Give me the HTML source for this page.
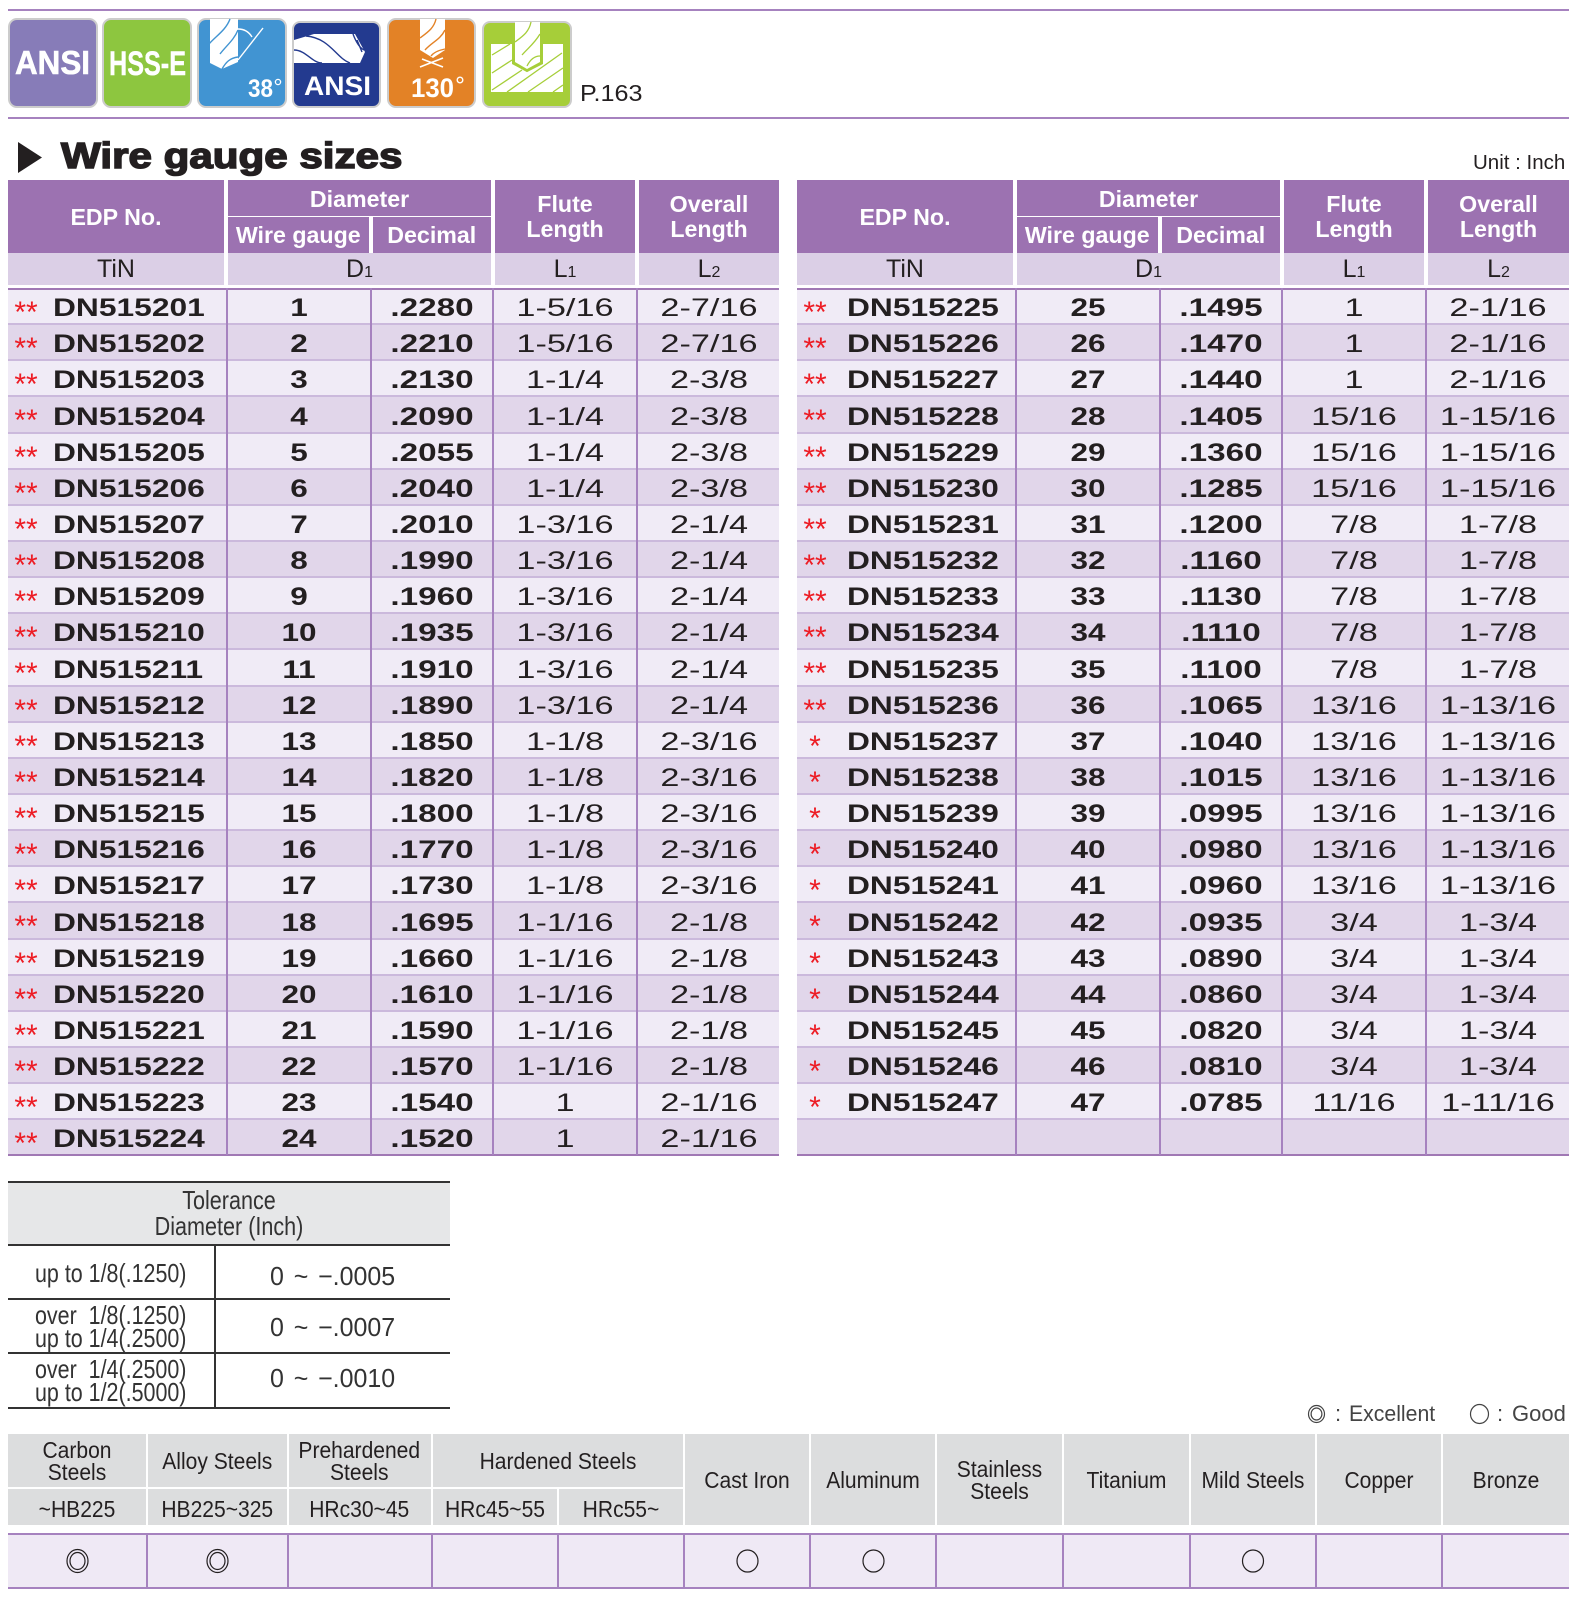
<!DOCTYPE html>
<html><head><meta charset="utf-8"><title>Wire gauge sizes</title>
<style>
html,body{margin:0;padding:0;background:#fff}
#pg{position:relative;width:1577px;height:1600px;overflow:hidden;background:#fff;font-family:"Liberation Sans",sans-serif;color:#231f20}
#pg div{position:absolute}
.ln{left:8px;width:1561px;height:2px;background:#a682bf}
.tb{left:0;top:0;width:800px;height:1160px}
.h{background:#9c72b1}.l{background:#dbcfe6}
.ht{color:#fff;font-weight:bold;font-size:23.2px;line-height:25px;text-align:center;white-space:nowrap}
.st{font-size:25px;line-height:28px;text-align:center;top:255px;color:#231f20}
.st span{font-size:16px}
.rows{left:8px;top:289px;width:771.5px;height:866px;overflow:hidden}
#pg .rows p{position:relative;margin:0;height:36.15px;box-sizing:border-box;border-bottom:2px solid #cbb9dc;background:#f0ebf6}
#pg .rows p:nth-child(even){background:#e1d6ea}
.rows i,.rows b,.rows u,.rows s,.rows em{position:absolute;top:1.2px;line-height:36px;font-size:25px;font-style:normal;text-decoration:none;text-align:center;white-space:nowrap}
.rows i{left:0;width:36px;top:6px;font-size:30px;color:#ed1c24;font-weight:normal}
.rows b{left:45px;transform:scaleX(1.27);transform-origin:left;font-weight:bold}
.rt b{left:50px}
.rows em{left:218.5px;width:144px;font-weight:bold;transform:scaleX(1.26)}
.rows u{left:362.5px;width:122px;font-weight:bold;transform:scaleX(1.33)}
.rows s{left:484.5px;width:144px;transform:scaleX(1.37)}
.rows s+s{left:630px;width:142px}
.v{width:2px;top:288px;height:867px;background:#a682bf}
.bar{left:8px;width:771.5px;height:2px;background:#a078b4}
.k{left:8px;width:442px;height:2px;background:#333}
.t{font-size:26px;line-height:28px;white-space:pre;color:#333}
.tl{left:35px;transform:scaleX(.825);transform-origin:left}
.tr{left:269.5px;word-spacing:3px;transform:scaleX(.96);transform-origin:left}
.g{background:#dcddde;top:1434px}
.m{font-size:23px;line-height:22px;margin-top:-1px;text-align:center;white-space:nowrap;transform:scaleX(.915);color:#231f20}
.dv{top:1534px;width:2px;height:54px;background:#a682bf}
.lg{font-size:22px;line-height:24px;color:#444;white-space:nowrap}
</style></head><body><div id="pg">

<div class="ln" style="top:9px"></div>
<div class="ln" style="top:117px"></div>

<svg style="position:absolute;left:0;top:0" width="600" height="120" viewBox="0 0 600 120" font-family="Liberation Sans, sans-serif" font-weight="bold" fill="#fff">
<rect x="9" y="19" width="88" height="88" rx="8" fill="#877cb8" stroke="#ccc" stroke-width="2"/>
<text x="15" y="74" font-size="33" textLength="75" lengthAdjust="spacingAndGlyphs" stroke="#fff" stroke-width=".6">ANSI</text>
<rect x="103" y="19" width="88" height="88" rx="8" fill="#8dc63f" stroke="#ccc" stroke-width="2"/>
<text x="109" y="75" font-size="34" textLength="77" lengthAdjust="spacingAndGlyphs" stroke="#fff" stroke-width=".4">HSS-E</text>
<rect x="198" y="19" width="88" height="88" rx="8" fill="#4194d2" stroke="#ccc" stroke-width="2"/>
<path d="M210 19H238V62L222 69L210 63Z"/>
<path d="M209 44C216 36 226 30 230 19M220 54C226 46 234 40 238 30M222 69C226 62 230 58 238 57" fill="none" stroke="#4194d2" stroke-width="1.4"/>
<path d="M238 60L263 28M238 29C244 29 249 32 252 37" fill="none" stroke="#fff" stroke-width="1.4"/>
<text x="248" y="97" font-size="25" textLength="25" lengthAdjust="spacingAndGlyphs">38</text>
<circle cx="278" cy="82" r="2.6" fill="none" stroke="#fff" stroke-width="1.3"/>
<rect x="293" y="22" width="87" height="85" rx="7" fill="#233a8f" stroke="#ccc" stroke-width="2"/>
<path d="M294 40L314 34H355L365 52L360 63H294Z"/>
<path d="M294 50C306 50 312 63 322 63M306 36C330 38 336 58 350 63M353 34C356 42 360 48 364 50M357 40L362 52" fill="none" stroke="#233a8f" stroke-width="1.4"/>
<text x="304" y="95" font-size="27" textLength="67" lengthAdjust="spacingAndGlyphs">ANSI</text>
<rect x="388" y="19" width="87" height="88" rx="8" fill="#e38226" stroke="#ccc" stroke-width="2"/>
<path d="M420 19H445V50L433 58L420 50Z"/>
<path d="M420 38C428 32 434 28 436 19M425 50C432 42 440 40 445 30M431 56C434 52 440 50 445 49" fill="none" stroke="#e38226" stroke-width="1.4"/>
<path d="M420 67L443 58M422 59L443 67" fill="none" stroke="#fff" stroke-width="1.6"/>
<text x="411" y="97" font-size="27" textLength="43" lengthAdjust="spacingAndGlyphs">130</text>
<circle cx="460" cy="80" r="2.8" fill="none" stroke="#fff" stroke-width="1.4"/>
<rect x="483" y="22" width="88" height="85" rx="7" fill="#a6ce39" stroke="#ccc" stroke-width="2"/>
<path d="M491 44H512V64L527 72L543 64V44H563V92H491Z"/>
<path d="M492 55L510 44M492 73L512 60M492 90L522 70M507 92L562 53M528 92L563 68M553 92L563 85" fill="none" stroke="#a6ce39" stroke-width="1.3"/>
<path d="M515 22H540V62L527 69L515 62Z"/>
<path d="M515 42C523 36 529 32 531 22M522 55C528 48 534 44 540 34M527 66C530 60 534 56 540 56" fill="none" stroke="#a6ce39" stroke-width="1.3"/>
<path d="M513 44V63L527 71L542 63V44" fill="none" stroke="#a6ce39" stroke-width="2"/>
</svg>
<div style="left:580px;top:79px;font-size:23.5px;line-height:28px;color:#231f20;transform:scaleX(1.07);transform-origin:left">P.163</div>

<svg style="position:absolute;left:18px;top:142px" width="25" height="32"><path d="M0 0L24 15.5L0 31Z" fill="#231f20"/></svg>
<div style="left:61px;top:135px;font-size:36px;line-height:42px;font-weight:bold;white-space:nowrap;transform:scaleX(1.17);transform-origin:left;-webkit-text-stroke:1.5px #231f20;color:#231f20">Wire gauge sizes</div>
<div style="left:1473px;top:152px;font-size:20.5px;line-height:22px;white-space:nowrap">Unit : Inch</div>

<!-- LEFT TABLE -->
<div class="tb">
<div class="h" style="left:8px;top:180px;width:216px;height:72.5px"></div>
<div class="h" style="left:228px;top:180px;width:263px;height:35.5px"></div>
<div class="h" style="left:228px;top:217px;width:140.5px;height:35.5px"></div>
<div class="h" style="left:372.5px;top:217px;width:118.5px;height:35.5px"></div>
<div class="h" style="left:495px;top:180px;width:140px;height:72.5px"></div>
<div class="h" style="left:639px;top:180px;width:140px;height:72.5px"></div>
<div class="l" style="left:8px;top:252.5px;width:216px;height:32px"></div>
<div class="l" style="left:228px;top:252.5px;width:263px;height:32px"></div>
<div class="l" style="left:495px;top:252.5px;width:140px;height:32px"></div>
<div class="l" style="left:639px;top:252.5px;width:140px;height:32px"></div>
<div class="ht" style="left:8px;top:205px;width:216px">EDP No.</div>
<div class="ht" style="left:228px;top:187px;width:263px">Diameter</div>
<div class="ht" style="left:228px;top:223px;width:140.5px">Wire gauge</div>
<div class="ht" style="left:372.5px;top:223px;width:118.5px">Decimal</div>
<div class="ht" style="left:495px;top:192px;width:140px">Flute<br>Length</div>
<div class="ht" style="left:639px;top:192px;width:140px">Overall<br>Length</div>
<div class="st" style="left:8px;width:216px">TiN</div>
<div class="st" style="left:228px;width:263px">D<span>1</span></div>
<div class="st" style="left:495px;width:140px">L<span>1</span></div>
<div class="st" style="left:639px;width:140px">L<span>2</span></div>
<div class="rows" style="width:771px">
<p><i>**</i><b>DN515201</b><em>1</em><u>.2280</u><s>1-5/16</s><s>2-7/16</s></p>
<p><i>**</i><b>DN515202</b><em>2</em><u>.2210</u><s>1-5/16</s><s>2-7/16</s></p>
<p><i>**</i><b>DN515203</b><em>3</em><u>.2130</u><s>1-1/4</s><s>2-3/8</s></p>
<p><i>**</i><b>DN515204</b><em>4</em><u>.2090</u><s>1-1/4</s><s>2-3/8</s></p>
<p><i>**</i><b>DN515205</b><em>5</em><u>.2055</u><s>1-1/4</s><s>2-3/8</s></p>
<p><i>**</i><b>DN515206</b><em>6</em><u>.2040</u><s>1-1/4</s><s>2-3/8</s></p>
<p><i>**</i><b>DN515207</b><em>7</em><u>.2010</u><s>1-3/16</s><s>2-1/4</s></p>
<p><i>**</i><b>DN515208</b><em>8</em><u>.1990</u><s>1-3/16</s><s>2-1/4</s></p>
<p><i>**</i><b>DN515209</b><em>9</em><u>.1960</u><s>1-3/16</s><s>2-1/4</s></p>
<p><i>**</i><b>DN515210</b><em>10</em><u>.1935</u><s>1-3/16</s><s>2-1/4</s></p>
<p><i>**</i><b>DN515211</b><em>11</em><u>.1910</u><s>1-3/16</s><s>2-1/4</s></p>
<p><i>**</i><b>DN515212</b><em>12</em><u>.1890</u><s>1-3/16</s><s>2-1/4</s></p>
<p><i>**</i><b>DN515213</b><em>13</em><u>.1850</u><s>1-1/8</s><s>2-3/16</s></p>
<p><i>**</i><b>DN515214</b><em>14</em><u>.1820</u><s>1-1/8</s><s>2-3/16</s></p>
<p><i>**</i><b>DN515215</b><em>15</em><u>.1800</u><s>1-1/8</s><s>2-3/16</s></p>
<p><i>**</i><b>DN515216</b><em>16</em><u>.1770</u><s>1-1/8</s><s>2-3/16</s></p>
<p><i>**</i><b>DN515217</b><em>17</em><u>.1730</u><s>1-1/8</s><s>2-3/16</s></p>
<p><i>**</i><b>DN515218</b><em>18</em><u>.1695</u><s>1-1/16</s><s>2-1/8</s></p>
<p><i>**</i><b>DN515219</b><em>19</em><u>.1660</u><s>1-1/16</s><s>2-1/8</s></p>
<p><i>**</i><b>DN515220</b><em>20</em><u>.1610</u><s>1-1/16</s><s>2-1/8</s></p>
<p><i>**</i><b>DN515221</b><em>21</em><u>.1590</u><s>1-1/16</s><s>2-1/8</s></p>
<p><i>**</i><b>DN515222</b><em>22</em><u>.1570</u><s>1-1/16</s><s>2-1/8</s></p>
<p><i>**</i><b>DN515223</b><em>23</em><u>.1540</u><s>1</s><s>2-1/16</s></p>
<p><i>**</i><b>DN515224</b><em>24</em><u>.1520</u><s>1</s><s>2-1/16</s></p>
</div>
<div class="bar" style="top:287.5px;width:771px"></div>
<div class="bar" style="top:1154px;width:771px"></div>
<div class="v" style="left:226px"></div>
<div class="v" style="left:370px"></div>
<div class="v" style="left:492px"></div>
<div class="v" style="left:636px"></div>
</div>

<!-- RIGHT TABLE -->
<div class="tb" style="left:789px">
<div class="h" style="left:8px;top:180px;width:216px;height:72.5px"></div>
<div class="h" style="left:228px;top:180px;width:263px;height:35.5px"></div>
<div class="h" style="left:228px;top:217px;width:140.5px;height:35.5px"></div>
<div class="h" style="left:372.5px;top:217px;width:118.5px;height:35.5px"></div>
<div class="h" style="left:495px;top:180px;width:140px;height:72.5px"></div>
<div class="h" style="left:639px;top:180px;width:141px;height:72.5px"></div>
<div class="l" style="left:8px;top:252.5px;width:216px;height:32px"></div>
<div class="l" style="left:228px;top:252.5px;width:263px;height:32px"></div>
<div class="l" style="left:495px;top:252.5px;width:140px;height:32px"></div>
<div class="l" style="left:639px;top:252.5px;width:141px;height:32px"></div>
<div class="ht" style="left:8px;top:205px;width:216px">EDP No.</div>
<div class="ht" style="left:228px;top:187px;width:263px">Diameter</div>
<div class="ht" style="left:228px;top:223px;width:140.5px">Wire gauge</div>
<div class="ht" style="left:372.5px;top:223px;width:118.5px">Decimal</div>
<div class="ht" style="left:495px;top:192px;width:140px">Flute<br>Length</div>
<div class="ht" style="left:639px;top:192px;width:141px">Overall<br>Length</div>
<div class="st" style="left:8px;width:216px">TiN</div>
<div class="st" style="left:228px;width:263px">D<span>1</span></div>
<div class="st" style="left:495px;width:140px">L<span>1</span></div>
<div class="st" style="left:639px;width:141px">L<span>2</span></div>
<div class="rows rt" style="width:772px">
<p><i>**</i><b>DN515225</b><em>25</em><u>.1495</u><s>1</s><s>2-1/16</s></p>
<p><i>**</i><b>DN515226</b><em>26</em><u>.1470</u><s>1</s><s>2-1/16</s></p>
<p><i>**</i><b>DN515227</b><em>27</em><u>.1440</u><s>1</s><s>2-1/16</s></p>
<p><i>**</i><b>DN515228</b><em>28</em><u>.1405</u><s>15/16</s><s>1-15/16</s></p>
<p><i>**</i><b>DN515229</b><em>29</em><u>.1360</u><s>15/16</s><s>1-15/16</s></p>
<p><i>**</i><b>DN515230</b><em>30</em><u>.1285</u><s>15/16</s><s>1-15/16</s></p>
<p><i>**</i><b>DN515231</b><em>31</em><u>.1200</u><s>7/8</s><s>1-7/8</s></p>
<p><i>**</i><b>DN515232</b><em>32</em><u>.1160</u><s>7/8</s><s>1-7/8</s></p>
<p><i>**</i><b>DN515233</b><em>33</em><u>.1130</u><s>7/8</s><s>1-7/8</s></p>
<p><i>**</i><b>DN515234</b><em>34</em><u>.1110</u><s>7/8</s><s>1-7/8</s></p>
<p><i>**</i><b>DN515235</b><em>35</em><u>.1100</u><s>7/8</s><s>1-7/8</s></p>
<p><i>**</i><b>DN515236</b><em>36</em><u>.1065</u><s>13/16</s><s>1-13/16</s></p>
<p><i>*</i><b>DN515237</b><em>37</em><u>.1040</u><s>13/16</s><s>1-13/16</s></p>
<p><i>*</i><b>DN515238</b><em>38</em><u>.1015</u><s>13/16</s><s>1-13/16</s></p>
<p><i>*</i><b>DN515239</b><em>39</em><u>.0995</u><s>13/16</s><s>1-13/16</s></p>
<p><i>*</i><b>DN515240</b><em>40</em><u>.0980</u><s>13/16</s><s>1-13/16</s></p>
<p><i>*</i><b>DN515241</b><em>41</em><u>.0960</u><s>13/16</s><s>1-13/16</s></p>
<p><i>*</i><b>DN515242</b><em>42</em><u>.0935</u><s>3/4</s><s>1-3/4</s></p>
<p><i>*</i><b>DN515243</b><em>43</em><u>.0890</u><s>3/4</s><s>1-3/4</s></p>
<p><i>*</i><b>DN515244</b><em>44</em><u>.0860</u><s>3/4</s><s>1-3/4</s></p>
<p><i>*</i><b>DN515245</b><em>45</em><u>.0820</u><s>3/4</s><s>1-3/4</s></p>
<p><i>*</i><b>DN515246</b><em>46</em><u>.0810</u><s>3/4</s><s>1-3/4</s></p>
<p><i>*</i><b>DN515247</b><em>47</em><u>.0785</u><s>11/16</s><s>1-11/16</s></p>
<p></p>
</div>
<div class="bar" style="top:287.5px;width:772px"></div>
<div class="bar" style="top:1154px;width:772px"></div>
<div class="v" style="left:226px"></div>
<div class="v" style="left:370px"></div>
<div class="v" style="left:492px"></div>
<div class="v" style="left:636px"></div>
</div>

<!-- TOLERANCE -->
<div style="left:8px;top:1182px;width:442px;height:63px;background:#e6e7e8"></div>
<div class="k" style="top:1181px"></div>
<div class="k" style="top:1244px"></div>
<div class="k" style="top:1298px"></div>
<div class="k" style="top:1352px"></div>
<div class="k" style="top:1407px"></div>
<div style="left:214px;top:1245px;width:2px;height:163px;background:#333"></div>
<div class="t" style="left:8px;width:442px;top:1188px;text-align:center;transform:scaleX(.83);line-height:25.5px">Tolerance
Diameter (Inch)</div>
<div class="t tl" style="top:1259px">up to 1/8(.1250)</div>
<div class="t tl" style="top:1301px">over  1/8(.1250)</div>
<div class="t tl" style="top:1324px">up to 1/4(.2500)</div>
<div class="t tl" style="top:1355px">over  1/4(.2500)</div>
<div class="t tl" style="top:1378px">up to 1/2(.5000)</div>
<div class="t tr" style="top:1262px">0 ~ −.0005</div>
<div class="t tr" style="top:1313px">0 ~ −.0007</div>
<div class="t tr" style="top:1364px">0 ~ −.0010</div>

<!-- LEGEND -->
<svg style="position:absolute;left:1300px;top:1400px" width="200" height="30" fill="none" stroke="#444">
<ellipse cx="16.5" cy="14" rx="8" ry="8.5" stroke-width="1.2"/><ellipse cx="16.5" cy="14" rx="5.4" ry="6" stroke-width="1.2"/>
<ellipse cx="179.5" cy="14" rx="9" ry="9.5" stroke-width="1.2"/>
</svg>
<div class="lg" style="left:1335px;top:1402px">:</div>
<div class="lg" style="left:1348.5px;top:1402px;transform:scaleX(.965);transform-origin:left">Excellent</div>
<div class="lg" style="left:1497px;top:1402px">:</div>
<div class="lg" style="left:1512px;top:1402px">Good</div>

<!-- MATERIALS -->
<div class="g" style="left:8px;width:138px;height:53px"></div>
<div class="g" style="left:148px;width:138.5px;height:53px"></div>
<div class="g" style="left:288.5px;width:142.5px;height:53px"></div>
<div class="g" style="left:433px;width:250px;height:53px"></div>
<div class="g" style="left:8px;width:138px;top:1489px;height:36px"></div>
<div class="g" style="left:148px;width:138.5px;top:1489px;height:36px"></div>
<div class="g" style="left:288.5px;width:142.5px;top:1489px;height:36px"></div>
<div class="g" style="left:433px;width:124px;top:1489px;height:36px"></div>
<div class="g" style="left:559px;width:124px;top:1489px;height:36px"></div>
<div class="g" style="left:685px;width:124px;height:91px"></div>
<div class="g" style="left:811px;width:124px;height:91px"></div>
<div class="g" style="left:937px;width:125px;height:91px"></div>
<div class="g" style="left:1064px;width:125px;height:91px"></div>
<div class="g" style="left:1191px;width:124px;height:91px"></div>
<div class="g" style="left:1317px;width:124px;height:91px"></div>
<div class="g" style="left:1443px;width:126px;height:91px"></div>
<div class="m" style="left:8px;width:138px;top:1440px">Carbon<br>Steels</div>
<div class="m" style="left:148px;width:138.5px;top:1451px">Alloy Steels</div>
<div class="m" style="left:288px;width:142.5px;top:1440px">Prehardened<br>Steels</div>
<div class="m" style="left:433px;width:250px;top:1451px">Hardened Steels</div>
<div class="m" style="left:8px;width:138px;top:1499px">~HB225</div>
<div class="m" style="left:148px;width:138.5px;top:1499px">HB225~325</div>
<div class="m" style="left:288px;width:142.5px;top:1499px">HRc30~45</div>
<div class="m" style="left:433px;width:124px;top:1499px">HRc45~55</div>
<div class="m" style="left:559px;width:124px;top:1499px">HRc55~</div>
<div class="m" style="left:685px;width:124px;top:1470px">Cast Iron</div>
<div class="m" style="left:811px;width:124px;top:1470px">Aluminum</div>
<div class="m" style="left:937px;width:125px;top:1459px">Stainless<br>Steels</div>
<div class="m" style="left:1064px;width:125px;top:1470px">Titanium</div>
<div class="m" style="left:1191px;width:124px;top:1470px">Mild Steels</div>
<div class="m" style="left:1317px;width:124px;top:1470px">Copper</div>
<div class="m" style="left:1443px;width:126px;top:1470px">Bronze</div>

<div style="left:8px;top:1534px;width:1561px;height:54px;background:#efe9f5"></div>
<div class="ln" style="top:1533px"></div>
<div class="ln" style="top:1587px"></div>
<div class="dv" style="left:146px"></div>
<div class="dv" style="left:286.5px"></div>
<div class="dv" style="left:431px"></div>
<div class="dv" style="left:557px"></div>
<div class="dv" style="left:683px"></div>
<div class="dv" style="left:809px"></div>
<div class="dv" style="left:935px"></div>
<div class="dv" style="left:1062px"></div>
<div class="dv" style="left:1188.5px"></div>
<div class="dv" style="left:1314.5px"></div>
<div class="dv" style="left:1441px"></div>
<svg style="position:absolute;left:0;top:1540px" width="1577" height="45" fill="none" stroke="#231f20" stroke-width="1.2">
<ellipse cx="77.5" cy="21" rx="10.5" ry="11.5"/><ellipse cx="77.5" cy="21" rx="7.5" ry="8.5"/>
<ellipse cx="217.5" cy="21" rx="10.5" ry="11.5"/><ellipse cx="217.5" cy="21" rx="7.5" ry="8.5"/>
<ellipse cx="747.5" cy="21" rx="10.5" ry="11"/>
<ellipse cx="873.5" cy="21" rx="10.5" ry="11"/>
<ellipse cx="1253" cy="21" rx="10.5" ry="11"/>
</svg>
</div></body></html>
